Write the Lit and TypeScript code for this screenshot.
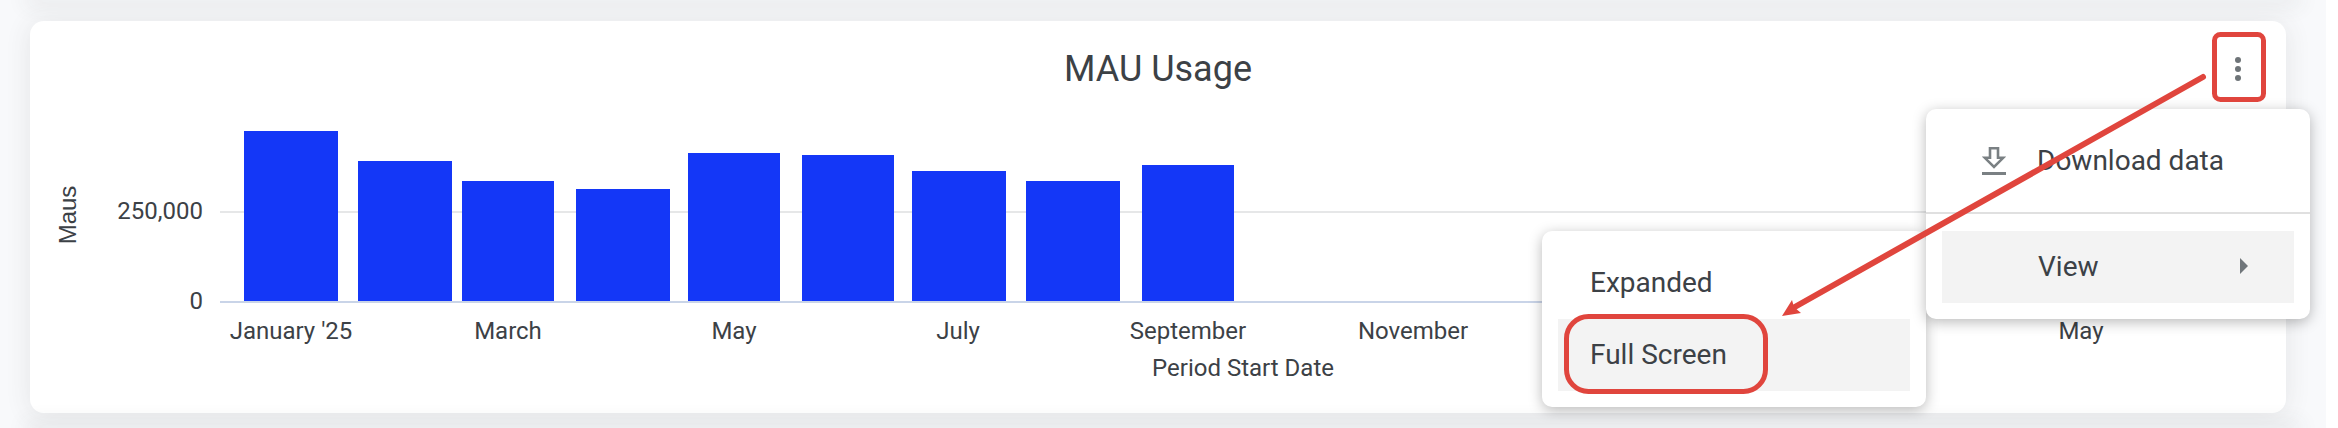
import { LitElement, html, css, svg } from "lit";
import { customElement } from "lit/decorators.js";

const bars: [number, number, number][] = [
  [244, 338, 131], [358, 452, 161], [462, 554, 181], [576, 670, 189], [688, 780, 153],
  [802, 894, 155], [912, 1006, 171], [1026, 1120, 181], [1142, 1234, 165],
];
const ticks: [string, number][] = [
  ["January '25", 291], ["March", 508], ["May", 734], ["July", 958],
  ["September", 1188], ["November", 1413], ["May", 2081],
];

@customElement("app-root")
export class AppRoot extends LitElement {
  static styles = css`
    :host {
      display: block; position: relative; width: 2326px; height: 428px; overflow: hidden;
      background: #f8f9fb; font-family: Roboto, "Liberation Sans", sans-serif; color: #3c4146;
    }
    .edge { height: 0; margin: 0 30px; box-shadow: 0 0 20px 5px rgba(60, 64, 67, 0.12); }
    .edge.bottom { margin-top: 15px; }
    .stack { padding-top: 21px; }
    .card {
      margin: 0 40px 0 30px; height: 392px; background: #fff; border-radius: 14px;
      box-shadow: 0 2px 26px rgba(60, 64, 67, 0.11); display: flex; flex-direction: column; overflow: hidden;
    }
    .head { height: 96px; flex: none; display: grid; grid-template-columns: 1fr auto 1fr; align-items: center; }
    .title { grid-column: 2; font-size: 36px; line-height: 40px; }
    .kebab { grid-column: 3; justify-self: end; margin-right: 42px; display: block; }
    .chart { display: block; width: 2256px; height: 296px; }
    .chart text { font-family: Roboto, sans-serif; font-size: 24px; fill: #3c4146; }
    .chart .axis-y { font-family: "Liberation Sans", Arial, sans-serif; }
    .menu {
      position: absolute; background: #fff; border-radius: 10px; font-size: 28px; width: 384px; box-sizing: border-box;
      box-shadow: 0 3px 14px rgba(0, 0, 0, 0.28);
    }
    .m1 { left: 1926px; top: 109px; height: 210px; }
    .m2 { left: 1542px; top: 231px; height: 176px; padding: 16px; }
    .item { height: 72px; box-sizing: border-box; display: flex; align-items: center; padding: 0 0 2px 32px; }
    .item.on { background: #f3f3f3; }
    .dl { height: 103px; display: flex; align-items: center; padding-left: 56px; border-bottom: 2px solid #e0e0e0; box-sizing: content-box; }
    .dl svg { flex: none; margin-right: 31px; }
    .view { margin: 17px 16px 16px; padding-left: 96px; padding-right: 46px; }
    .view svg { margin-left: auto; }
    .marks { position: absolute; left: 0; top: 0; pointer-events: none; }
  `;

  render() {
    return html`
      <div class="stack">
        <div class="edge" style="margin-top:-21px;margin-bottom:21px"></div>
        <section class="card">
          <header class="head">
            <div class="title">MAU Usage</div>
            <svg class="kebab" width="12" height="36" viewBox="0 0 12 36" fill="#6e7478">
              <circle cx="6" cy="9" r="3" /><circle cx="6" cy="18" r="3" /><circle cx="6" cy="27" r="3" />
            </svg>
          </header>
          <svg class="chart" viewBox="30 117 2256 296">
            <rect x="220" y="211" width="2066" height="2" fill="#e6e7e8" />
            ${bars.map(([a, b, t]) => svg`<rect x=${a} y=${t} width=${b - a} height=${301 - t} fill="#1437f7" />`)}
            <rect x="220" y="301" width="2066" height="2" fill="#c9d4e8" />
            <text class="axis-y" transform="translate(76 215) rotate(-90)" text-anchor="middle">Maus</text>
            <text x="203" y="219" text-anchor="end">250,000</text>
            <text x="203" y="309" text-anchor="end">0</text>
            ${ticks.map(([t, x]) => svg`<text x=${x} y="339" text-anchor="middle">${t}</text>`)}
            <text x="1243" y="376" text-anchor="middle">Period Start Date</text>
          </svg>
        </section>
        <div class="edge bottom"></div>
      </div>

      <div class="menu m2">
        <div class="item">Expanded</div>
        <div class="item on">Full Screen</div>
      </div>
      <div class="menu m1">
        <div class="dl">
          <svg width="24" height="28" viewBox="0 0 24 28" fill="none" stroke="#7a8083" stroke-width="2.6">
            <path d="M8 1.3h8v9.5h5.2L12 20 2.8 10.8H8z" /><path d="M0 26.5h24" stroke-width="3" />
          </svg>
          Download data
        </div>
        <div class="item on view">
          View
          <svg width="8" height="16" viewBox="0 0 8 16" fill="#70767a"><path d="M0 0l8 8-8 8z" /></svg>
        </div>
      </div>

      <svg class="marks" width="2326" height="428" viewBox="0 0 2326 428" fill="none" stroke="#e0453d" stroke-width="5">
        <rect x="2214.5" y="34.5" width="49" height="65" rx="6" />
        <rect x="1566.5" y="316.5" width="199" height="75" rx="22" />
        <path d="M2203 77L1793 308" stroke-width="6" stroke-linecap="round" />
        <path d="M1782 316L1792 300 1794 307 1801 313z" fill="#e0453d" stroke="none" />
      </svg>
    `;
  }
}
